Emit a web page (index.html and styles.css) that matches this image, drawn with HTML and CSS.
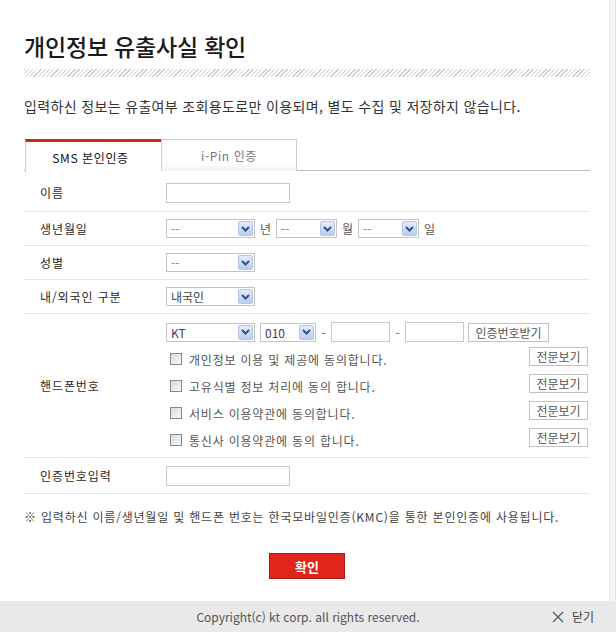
FILE: index.html
```html
<!DOCTYPE html>
<html lang="ko">
<head>
<meta charset="utf-8">
<title>개인정보 유출사실 확인</title>
<link rel="stylesheet" href="styles.css">
</head>
<body>
<div class="page">
  <div class="main">
    <h1 class="title">개인정보 유출사실 확인</h1>
    <div class="hatch"></div>
    <p class="desc">입력하신 정보는 유출여부 조회용도로만 이용되며, 별도 수집 및 저장하지 않습니다.</p>

    <div class="tabs">
      <div class="tab active">SMS 본인인증</div>
      <div class="tab">i-Pin 인증</div>
    </div>

    <div class="form">
      <div class="row r-name">
        <div class="label">이름</div>
        <div class="field"><div class="input w124"></div></div>
      </div>
      <div class="row r-std">
        <div class="label">생년월일</div>
        <div class="field">
          <div class="sel w89"><span class="sel-val">--</span><span class="sel-btn"><svg viewBox="0 0 9 6" width="9" height="6"><path d="M1 1 L4.5 4.5 L8 1" stroke="#34508a" stroke-width="2" fill="none"/></svg></span></div>
          <span class="unit">년</span>
          <div class="sel w61"><span class="sel-val">--</span><span class="sel-btn"><svg viewBox="0 0 9 6" width="9" height="6"><path d="M1 1 L4.5 4.5 L8 1" stroke="#34508a" stroke-width="2" fill="none"/></svg></span></div>
          <span class="unit">월</span>
          <div class="sel w61"><span class="sel-val">--</span><span class="sel-btn"><svg viewBox="0 0 9 6" width="9" height="6"><path d="M1 1 L4.5 4.5 L8 1" stroke="#34508a" stroke-width="2" fill="none"/></svg></span></div>
          <span class="unit">일</span>
        </div>
      </div>
      <div class="row r-std">
        <div class="label">성별</div>
        <div class="field">
          <div class="sel w89"><span class="sel-val">--</span><span class="sel-btn"><svg viewBox="0 0 9 6" width="9" height="6"><path d="M1 1 L4.5 4.5 L8 1" stroke="#34508a" stroke-width="2" fill="none"/></svg></span></div>
        </div>
      </div>
      <div class="row r-std">
        <div class="label">내/외국인 구분</div>
        <div class="field">
          <div class="sel w89"><span class="sel-val dark">내국인</span><span class="sel-btn"><svg viewBox="0 0 9 6" width="9" height="6"><path d="M1 1 L4.5 4.5 L8 1" stroke="#34508a" stroke-width="2" fill="none"/></svg></span></div>
        </div>
      </div>
      <div class="row r-phone">
        <div class="label">핸드폰번호</div>
        <div class="field col">
          <div class="line">
            <div class="sel w89"><span class="sel-val dark">KT</span><span class="sel-btn"><svg viewBox="0 0 9 6" width="9" height="6"><path d="M1 1 L4.5 4.5 L8 1" stroke="#34508a" stroke-width="2" fill="none"/></svg></span></div>
            <div class="sel w56"><span class="sel-val dark">010</span><span class="sel-btn"><svg viewBox="0 0 9 6" width="9" height="6"><path d="M1 1 L4.5 4.5 L8 1" stroke="#34508a" stroke-width="2" fill="none"/></svg></span></div>
            <span class="dash">-</span>
            <div class="input w59"></div>
            <span class="dash">-</span>
            <div class="input w59"></div>
            <button class="btn w81" type="button">인증번호받기</button>
          </div>
          <div class="agree">
            <label class="chk"><span class="box"></span>개인정보 이용 및 제공에 동의합니다.</label>
            <button class="btn view" type="button">전문보기</button>
          </div>
          <div class="agree">
            <label class="chk"><span class="box"></span>고유식별 정보 처리에 동의 합니다.</label>
            <button class="btn view" type="button">전문보기</button>
          </div>
          <div class="agree">
            <label class="chk"><span class="box"></span>서비스 이용약관에 동의합니다.</label>
            <button class="btn view" type="button">전문보기</button>
          </div>
          <div class="agree">
            <label class="chk"><span class="box"></span>통신사 이용약관에 동의 합니다.</label>
            <button class="btn view" type="button">전문보기</button>
          </div>
        </div>
      </div>
      <div class="row r-code">
        <div class="label">인증번호입력</div>
        <div class="field"><div class="input w124"></div></div>
      </div>
    </div>

    <p class="note">※ 입력하신 이름/생년월일 및 핸드폰 번호는 한국모바일인증(KMC)을 통한 본인인증에 사용됩니다.</p>

    <div class="actions">
      <button class="ok" type="button">확인</button>
    </div>
  </div>
  <div class="edge"></div>
</div>
<footer class="footer">
  <span class="copy">Copyright(c) kt corp. all rights reserved.</span>
  <span class="close"><svg viewBox="0 0 12 12" width="12" height="12"><path d="M1 1 L11 11 M11 1 L1 11" stroke="#555" stroke-width="1.2" fill="none"/></svg>닫기</span>
</footer>
</body>
</html>
```

FILE: styles.css
```css
* { box-sizing: border-box; }
html, body { margin: 0; padding: 0; background: #fff; }
body {
  font-family: "Noto Sans CJK KR", "Noto Sans", sans-serif;
  color: #333;
  font-size: 12px;
  width: 616px;
  height: 632px;
  overflow: hidden;
}
.page { display: flex; height: 601px; }
.main { width: 609px; padding: 34px 0 0 24px; }
.edge { width: 7px; border-left: 1px solid #ececec; background: #f6f6f6; border-right: 1px solid #e6e6e6; }

.title {
  margin: 0;
  font-size: 23px;
  line-height: 24px;
  font-weight: 500;
  letter-spacing: -0.2px;
  color: #1a1a1a;
}
.hatch {
  margin-top: 11px;
  width: 566px;
  height: 8px;
  background: repeating-linear-gradient(-45deg, #cdcdcd 0 1px, #fff 1px 3px);
}
.desc {
  margin: 19px 0 0;
  font-size: 14px;
  line-height: 20px;
  letter-spacing: 0.35px;
  color: #333;
}

.tabs {
  margin-top: 23px;
  width: 566px;
  height: 32px;
  display: flex;
  border-bottom: 1px solid #bdbdbd;
}
.tab {
  height: 32px;
  display: flex;
  align-items: center;
  justify-content: center;
  font-size: 12px;
  letter-spacing: 0.6px;
  color: #666;
}
.tab.active {
  width: 136px;
  margin-left: 1px;
  border-top: 3px solid #c9281c;
  border-left: 1px solid #cfcfcf;
  background: #fff;
  color: #111;
  padding-top: 1px;
  padding-right: 6px;
  margin-bottom: -1px;
  height: 33px;
}
.tab:not(.active) {
  width: 136px;
  border: 1px solid #cfcfcf;
  border-bottom: none;
  background: linear-gradient(#fff 70%, #f3f3f3);
  color: #777;
}

.form { width: 566px; }
.row {
  display: flex;
  align-items: center;
  border-bottom: 1px solid #e6e6e6;
}
.r-name { height: 41px; padding-top: 3px; }
.r-std { height: 34px; }
.r-phone { height: 144px; }
.r-code { height: 36px; }
.label {
  width: 142px;
  padding-left: 16px;
  font-size: 12px;
  letter-spacing: 0.9px;
  color: #2a2a2a;
}
.field { display: flex; align-items: center; gap: 5px; flex: 1; }
.field.col { flex-direction: column; align-items: stretch; gap: 0; align-self: stretch; padding-top: 8px; padding-right: 2px; }

.input { height: 20px; border: 1px solid #c9c9c9; background: #fff; }
.w124 { width: 124px; }
.w59 { width: 59px; }
.w89 { width: 89px; }
.w61 { width: 61px; }
.w56 { width: 56px; }
.w81 { width: 81px; }

.sel {
  height: 19px;
  border: 1px solid #c4c4c4;
  padding: 1px;
  display: flex;
  align-items: center;
  background: #fff;
}
.sel-val { flex: 1; padding-left: 3px; font-size: 12px; line-height: 15px; color: #888; }
.sel-val.dark { color: #444; }
.sel-btn {
  width: 15px;
  height: 15px;
  border: 1px solid #b3c6e6;
  border-radius: 2px;
  background: linear-gradient(#e3ecfa, #b9cdee);
  display: flex;
  align-items: center;
  justify-content: center;
}
.unit { font-size: 12px; color: #555; }
.dash { font-size: 12px; color: #666; width: 5px; text-align: center; }

.line { display: flex; align-items: center; gap: 5px; height: 20px; margin-bottom: 1px; }
.line .btn { margin-left: -1px; }
.btn {
  height: 19px;
  padding: 0;
  border: 1px solid #c2c2c2;
  background: #fff;
  font-family: inherit;
  font-size: 12px;
  line-height: 17px;
  color: #555;
}
.agree { display: flex; align-items: center; justify-content: space-between; height: 27px; }
.chk { display: flex; align-items: center; gap: 7px; margin-left: 4px; margin-top: 5px; font-size: 12px; letter-spacing: 0.8px; color: #555; }
.box {
  width: 12px;
  height: 12px;
  border: 1px solid #7d8b97;
  background: linear-gradient(135deg, #dcdcdc, #f7f7f7);
}
.view { width: 59px; }

.note {
  margin: 13px 0 0;
  font-size: 12px;
  line-height: 20px;
  letter-spacing: 0.8px;
  color: #444;
}
.actions { width: 566px; display: flex; justify-content: center; margin-top: 26px; }
.ok {
  width: 76px;
  height: 26px;
  border: 1px solid #a81c12;
  background: #e0251a;
  color: #fff;
  font-family: inherit;
  font-size: 13px;
  font-weight: 700;
  padding: 0;
}

.footer {
  height: 31px;
  background: #e9e9e9;
  display: flex;
  align-items: center;
  position: relative;
  justify-content: center;
  font-size: 12px;
  color: #555;
}
.close {
  position: absolute;
  right: 22px;
  top: 7px;
  display: flex;
  align-items: center;
  gap: 8px;
  font-size: 12px;
  color: #444;
}
```
